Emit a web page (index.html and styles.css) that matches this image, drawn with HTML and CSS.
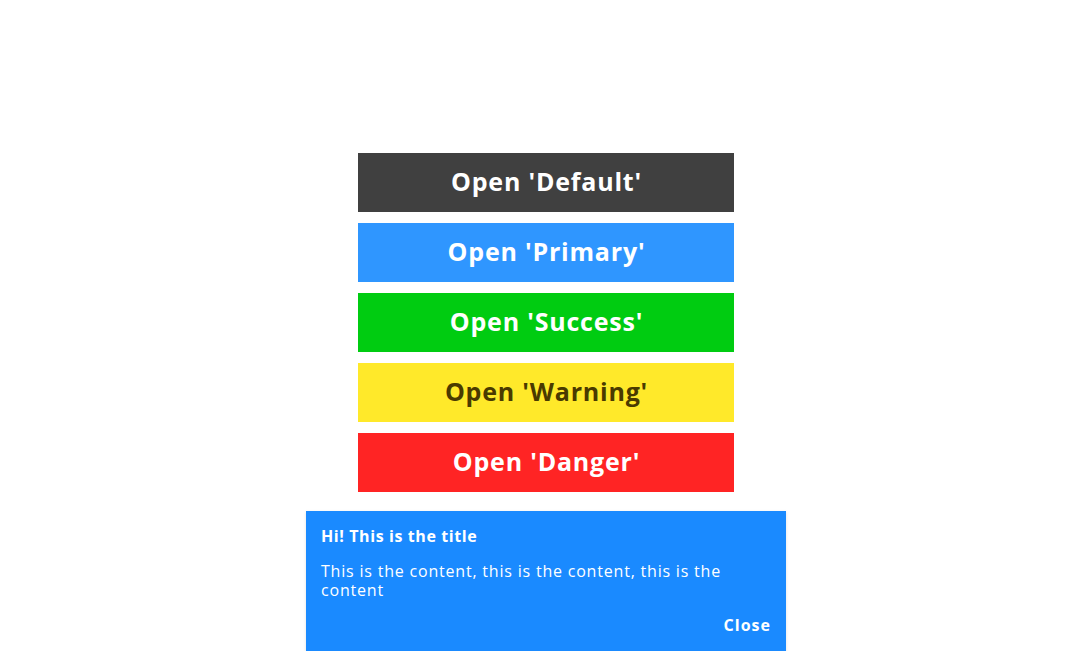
FILE: index.html
```html
<!DOCTYPE html>
<html>
<head>
<meta charset="utf-8">
<link rel="stylesheet" href="styles.css">
</head>
<body>
<main class="page">
  <div class="buttons">
    <button class="btn btn-default">Open 'Default'</button>
    <button class="btn btn-primary">Open 'Primary'</button>
    <button class="btn btn-success">Open 'Success'</button>
    <button class="btn btn-warning">Open 'Warning'</button>
    <button class="btn btn-danger">Open 'Danger'</button>
  </div>
  <div class="notice">
    <div class="notice-title">Hi! This is the title</div>
    <div class="notice-content">This is the content, this is the content, this is the content</div>
    <div class="notice-actions"><span class="notice-close">Close</span></div>
  </div>
</main>
</body>
</html>
```

FILE: styles.css
```css
html, body {
  margin: 0;
  padding: 0;
  background: #ffffff;
}
body {
  font-family: "Open Sans", "Liberation Sans", sans-serif;
}
.page {
  display: flex;
  flex-direction: column;
  align-items: center;
  padding-top: 153px;
  padding-left: 12px;
}
.buttons {
  display: flex;
  flex-direction: column;
  gap: 11px;
}
.btn {
  width: 376px;
  height: 59px;
  border: none;
  margin: 0;
  padding: 0 0 3px 1px;
  font-family: "Open Sans", "Liberation Sans", sans-serif;
  font-weight: 700;
  font-size: 25px;
  letter-spacing: 0.8px;
  color: #ffffff;
  cursor: pointer;
}
.btn-default { background: #404040; }
.btn-primary { background: #2f96ff; }
.btn-success { background: #00cc11; }
.btn-warning { background: #ffe92a; color: #4a3a00; }
.btn-danger { background: #ff2424; }
.notice {
  margin-top: 19px;
  width: 480px;
  box-sizing: border-box;
  height: 140px;
  background: #1a8aff;
  color: #ffffff;
  padding: 16px 16px 0 15px;
  box-shadow: 0 1px 3px rgba(0,0,0,0.12);
}
.notice-title {
  font-weight: 700;
  font-size: 16px;
  line-height: 19px;
  letter-spacing: 0.6px;
}
.notice-content {
  margin-top: 16px;
  font-size: 16px;
  line-height: 19px;
  letter-spacing: 0.8px;
}
.notice-actions {
  display: flex;
  justify-content: flex-end;
  margin-top: 16px;
}
.notice-close {
  font-weight: 700;
  font-size: 16px;
  line-height: 19px;
  letter-spacing: 1px;
  margin-right: -1px;
}
```
